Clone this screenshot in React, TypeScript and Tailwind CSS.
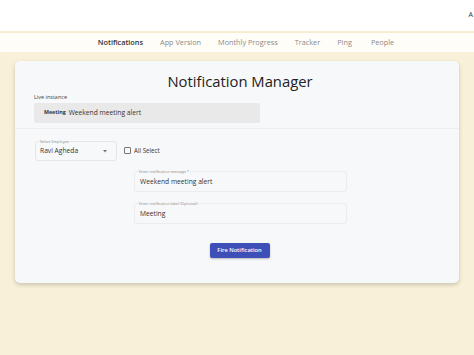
import React from "react";

const font = { fontFamily: '"Open Sans", "Liberation Sans", sans-serif' };

export default function App() {
  return (
    <div className="w-[474px] h-[355px] bg-[#f8f0d8] flex flex-col overflow-hidden text-[#222]" style={font}>
      <div className="h-[31px] bg-white flex items-center justify-end shrink-0">
        <span className="text-[7px] text-[#333] mr-[1px]">A</span>
      </div>
      <div className="h-[2px] bg-[#f6ecd0] shrink-0" />
      <nav className="h-[19px] bg-[#fffdf8] flex items-center justify-center gap-[17px] text-[7.3px] text-[#8a8a8a] shrink-0 pl-[18px]">
        <span className="font-semibold text-[#333]">Notifications</span>
        <span>App Version</span>
        <span>Monthly Progress</span>
        <span>Tracker</span>
        <span>Ping</span>
        <span className="ml-[2px]">People</span>
      </nav>
      <div className="px-[15px] pt-[9px]">
        <div className="bg-[#f7f8fa] rounded-[5px] shadow-[0_2px_4px_rgba(0,0,0,0.18)] h-[222px] flex flex-col">
          <h1 className="text-center text-[14.8px] text-[#222] mt-[10px] leading-[20px] pl-[6px]">Notification Manager</h1>
          <div className="px-[19px] mt-[3px]">
            <div className="text-[5.5px] text-[#444] leading-[7px]">Live instance</div>
            <div className="mt-[2px] w-[226px] h-[20px] bg-[#e9e9ea] rounded-[2px] flex items-center px-[10px] gap-[3px]">
              <span className="text-[5.3px] font-bold text-[#333]">Meeting</span>
              <span className="text-[6.7px] text-[#333]">Weekend meeting alert</span>
            </div>
          </div>
          <div className="h-px bg-[#eceef0] mt-[5px]" />
          <div className="px-[20px] pt-[12px] flex items-center gap-[7px]">
            <div className="relative w-[82px] h-[20px] border border-[#e6e6e6] rounded-[3px] flex items-center px-[4px]">
              <span className="absolute -top-[3px] left-[3px] bg-[#f7f8fa] px-[1px] text-[3.8px] text-[#888] leading-[5px]">Select Employee</span>
              <span className="text-[6.7px] text-[#333]">Ravi Agheda</span>
              <svg className="absolute right-[9px] top-[8px]" width="4" height="3" viewBox="0 0 4 3"><path d="M0 0h4L2 2.5z" fill="#777" /></svg>
            </div>
            <div className="flex items-center gap-[3px]">
              <div className="w-[7px] h-[7px] border border-[#777] rounded-[1px]" />
              <span className="text-[6.2px] text-[#333]">All Select</span>
            </div>
          </div>
          <div className="pl-[119px] pt-[10px] flex flex-col gap-[11px]">
            <div className="relative w-[213px] h-[21px] border border-[#ececec] rounded-[3px] flex items-center px-[5px] pt-[1px]">
              <span className="absolute -top-[3px] left-[3px] bg-[#f7f8fa] px-[1px] text-[3.8px] text-[#888] leading-[5px]">Enter notification message *</span>
              <span className="text-[6.7px] text-[#333]">Weekend meeting alert</span>
            </div>
            <div className="relative w-[213px] h-[21px] border border-[#ececec] rounded-[3px] flex items-center px-[5px] pt-[1px]">
              <span className="absolute -top-[3px] left-[3px] bg-[#f7f8fa] px-[1px] text-[3.8px] text-[#888] leading-[5px]">Enter notification label (Optional)</span>
              <span className="text-[6.7px] text-[#333]">Meeting</span>
            </div>
          </div>
          <div className="flex justify-center mt-[19px]">
            <button className="w-[60px] h-[15px] bg-[#3f4fb8] rounded-[2px] text-white text-[5.7px] font-semibold shadow-[0_1px_2px_rgba(0,0,0,0.25)] ml-[5px]">Fire Notification</button>
          </div>
        </div>
      </div>
    </div>
  );
}
